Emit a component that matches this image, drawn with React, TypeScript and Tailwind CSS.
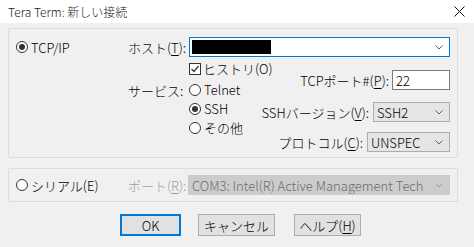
import React from "react";

const FONT = { fontFamily: '"Noto Sans CJK JP", "Noto Sans", sans-serif' };

function Radio({ checked, label, className = "" }: { checked?: boolean; label: React.ReactNode; className?: string }) {
  return (
    <div className={`flex items-center gap-[3px] ${className}`}>
      <span className="flex h-[12px] w-[12px] shrink-0 items-center justify-center rounded-full border border-[#333] bg-white">
        {checked && <span className="h-[6px] w-[6px] rounded-full bg-[#333]" />}
      </span>
      <span>{label}</span>
    </div>
  );
}

function Chevron({ color = "#606060" }: { color?: string }) {
  return (
    <svg width="8" height="5" viewBox="0 0 8 5" className="shrink-0">
      <polyline points="0.5,0.5 4,4 7.5,0.5" fill="none" stroke={color} strokeWidth="1" />
    </svg>
  );
}

function U({ children }: { children: React.ReactNode }) {
  return <span className="underline underline-offset-2">{children}</span>;
}

export default function App() {
  return (
    <div
      className="h-[247px] w-[474px] overflow-hidden whitespace-nowrap bg-[#f0f0f0] text-[13px] font-light leading-none text-black"
      style={FONT}
    >
      <div className="flex h-[23px] items-center justify-between bg-white pl-[8px] pr-[9px] text-[12px] text-[#222]">
        <span>Tera Term: 新しい接続</span>
        <svg width="11" height="11" viewBox="0 0 11 11">
          <path d="M0.5 0.5 L10.5 10.5 M10.5 0.5 L0.5 10.5" stroke="#111" strokeWidth="1" />
        </svg>
      </div>

      <div className="ml-[8px] mt-[5px] flex h-[130px] w-[450px] flex-col rounded-[2px] border border-[#dcdcdc]">
        <div className="mt-[8px] flex h-[20px] items-center">
          <Radio checked label="TCP/IP" className="ml-[7px] w-[112px]" />
          <span className="w-[61px]">
            ホスト(<U>T</U>):
          </span>
          <div className="flex h-[20px] w-[261px] items-center justify-between border border-[#0078d7] bg-white pl-[2px] pr-[6px]">
            <div className="h-[14px] w-[79px] bg-black" />
            <Chevron />
          </div>
        </div>

        <div className="flex">
          <div className="ml-[119px] w-[61px] pt-[27px]">サービス:</div>
          <div className="flex w-[70px] flex-col gap-[6px] pt-[5px]">
            <div className="flex items-center gap-[2px]">
              <svg width="12" height="12" viewBox="0 0 12 12" className="shrink-0">
                <rect x="0.5" y="0.5" width="11" height="11" fill="white" stroke="#333" />
                <polyline points="2.5,6 5,8.5 9.5,3" fill="none" stroke="#333" strokeWidth="1.2" />
              </svg>
              <span>ヒストリ(O)</span>
            </div>
            <Radio label="Telnet" className="mt-[2px]" />
            <Radio checked label="SSH" />
            <Radio label="その他" />
          </div>
          <div className="flex flex-1 flex-col items-end pr-[7px] pt-[13px]">
            <div className="flex items-center gap-[3px]">
              <span>
                TCPポート#(<U>P</U>):
              </span>
              <div className="flex h-[20px] w-[58px] items-center border border-[#7a7a7a] bg-white px-[3px]">22</div>
            </div>
            <div className="mt-[12px] flex items-center gap-[4px]">
              <span>
                SSHバージョン(<U>V</U>):
              </span>
              <div className="flex h-[20px] w-[77px] items-center justify-between border border-[#adadad] bg-[#e5e5e5] pl-[3px] pr-[6px]">
                SSH2
                <Chevron />
              </div>
            </div>
            <div className="mt-[10px] flex items-center gap-[4px]">
              <span>
                プロトコル(<U>C</U>):
              </span>
              <div className="flex h-[20px] w-[83px] items-center justify-between border border-[#adadad] bg-[#e5e5e5] pl-[3px] pr-[6px]">
                UNSPEC
                <Chevron />
              </div>
            </div>
          </div>
        </div>
      </div>

      <div className="ml-[8px] mt-[10px] flex h-[34px] w-[450px] items-center rounded-[2px] border border-[#dcdcdc]">
        <Radio label="シリアル(E)" className="ml-[7px] w-[112px]" />
        <span className="w-[60px] text-[#a0a0a0]">
          ポート(<U>R</U>):
        </span>
        <div className="flex h-[20px] w-[262px] items-center justify-between border border-[#cccccc] bg-[#cccccc] pl-[3px] pr-[6px] text-[#6d6d6d]">
          <span>COM3: Intel(R) Active Management Tech</span>
          <Chevron color="#9a9a9a" />
        </div>
      </div>

      <div className="ml-[120px] mt-[12px] flex items-center">
        <button className="flex h-[22px] w-[61px] items-center justify-center border-2 border-[#0078d7] bg-[#e1e1e1]">OK</button>
        <button className="ml-[17px] flex h-[22px] w-[77px] items-center justify-center border border-[#adadad] bg-[#e1e1e1]">
          キャンセル
        </button>
        <button className="ml-[19px] flex h-[22px] w-[67px] items-center justify-center border border-[#adadad] bg-[#e1e1e1]">
          ヘルプ(<U>H</U>)
        </button>
      </div>
    </div>
  );
}
